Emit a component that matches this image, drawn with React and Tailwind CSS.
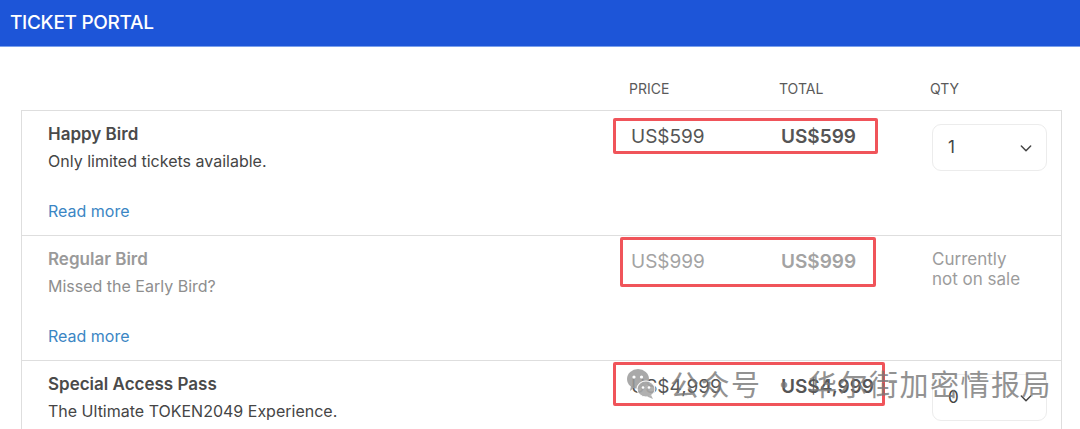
import React from "react";

function Chevron() {
  return (
    <svg width="16" height="16" viewBox="0 0 24 24" fill="none" stroke="#444" strokeWidth="2.2" strokeLinecap="round" strokeLinejoin="round">
      <path d="M5 9l7 7 7-7" />
    </svg>
  );
}

function QtySelect({ value }) {
  return (
    <div className="w-[115px] h-[47px] rounded-[9px] border border-[#ececec] flex items-center justify-between pl-[15px] pr-[12px] text-[17px] text-[#444]">
      <span>{value}</span>
      <Chevron />
    </div>
  );
}

function WeChatIcon() {
  return (
    <svg width="30" height="32" viewBox="0 0 30 32">
      <ellipse cx="12" cy="12" rx="11" ry="10" fill="#9a9a9a" opacity="0.85" />
      <path d="M5 19 L4 24 L9 20 Z" fill="#9a9a9a" opacity="0.85" />
      <circle cx="8" cy="10" r="1.6" fill="#fff" />
      <circle cx="15.5" cy="10" r="1.6" fill="#fff" />
      <ellipse cx="20" cy="22" rx="9" ry="8" fill="#a8a8a8" opacity="0.9" stroke="#fff" strokeWidth="1.2" />
      <path d="M25 28 L27 32 L21 29.5 Z" fill="#a8a8a8" opacity="0.9" />
      <circle cx="17" cy="20.5" r="1.3" fill="#fff" />
      <circle cx="23" cy="20.5" r="1.3" fill="#fff" />
    </svg>
  );
}

function Row({ title, sub, readMore, price, total, disabled, qty, box, last }) {
  const nameColor = disabled ? "text-[#9a9a9a]" : "text-[#4a4a4a]";
  const subColor = disabled ? "text-[#8e8e8e]" : "text-[#454545]";
  const priceColor = disabled ? "text-[#a3a3a3]" : "text-[#555]";
  return (
    <div className={`relative flex ${last ? "" : "border-b border-[#dedede]"} ${last ? "h-[70px]" : "h-[125px]"}`}>
      <div className="flex-1 pl-[26px] pt-[12px]">
        <div className={`text-[17px] leading-[22px] font-semibold ${nameColor}`}>{title}</div>
        <div className={`mt-[4px] text-[16px] leading-[24px] ${subColor}`}>{sub}</div>
        {readMore && (
          <div className="mt-[26px] text-[16px] leading-[24px] text-[#3b86c4]">Read more</div>
        )}
      </div>
      <div className={`w-[150px] pt-[14px] text-[19px] leading-[24px] ${priceColor}`}>{price}</div>
      <div className={`w-[151px] pt-[14px] text-[19px] leading-[24px] font-semibold ${priceColor}`}>{total}</div>
      <div className="w-[129px] pt-[13px]">{qty}</div>
      {box}
    </div>
  );
}

export default function App() {
  return (
    <div className="w-[1080px] h-[429px] overflow-hidden bg-white relative" style={{ fontFamily: "Inter, 'Noto Sans', sans-serif" }}>
      <div className="h-[47px] bg-[#1d55d8] border-b border-[#7aa0ec] flex items-center pl-[10px]">
        <span className="text-white text-[19px] font-medium tracking-[-0.3px]">TICKET PORTAL</span>
      </div>
      <div className="flex h-[63px] items-center pt-[19px] text-[14px] text-[#5a5a5a]">
        <div className="w-[629px]" />
        <div className="w-[150px]">PRICE</div>
        <div className="w-[151px]">TOTAL</div>
        <div>QTY</div>
      </div>
      <div className="ml-[21px] w-[1041px] border-l border-r border-t border-[#dedede]">
        <Row
          title="Happy Bird"
          sub="Only limited tickets available."
          readMore
          price="US$599"
          total="US$599"
          qty={<QtySelect value="1" />}
          box={<div className="absolute left-[591px] top-[7px] w-[265px] h-[36px] border-[3px] border-[#f0545a] rounded-[2px]" />}
        />
        <Row
          title="Regular Bird"
          sub="Missed the Early Bird?"
          readMore
          disabled
          price="US$999"
          total="US$999"
          qty={
            <div className="pt-[0px] text-[17px] leading-[20px] text-[#9c9c9c]">
              Currently
              <br />
              not on sale
            </div>
          }
          box={<div className="absolute left-[598px] top-[1px] w-[256px] h-[50px] border-[3px] border-[#f0545a] rounded-[2px]" />}
        />
        <Row
          title="Special Access Pass"
          sub="The Ultimate TOKEN2049 Experience."
          price="US$4,999"
          total="US$4,999"
          last
          qty={<div className="mt-[0px]"><QtySelect value="0" /></div>}
          box={<div className="absolute left-[591px] top-[1px] w-[272px] h-[44px] border-[3px] border-[#f0545a] rounded-[2px]" />}
        />
      </div>
      <div className="absolute left-[626px] top-[367px] flex items-center gap-[14px] pointer-events-none">
        <WeChatIcon />
        <span
          className="text-[29px] leading-[32px] text-[#777] opacity-80 tracking-[1.5px]"
          style={{ fontFamily: "'Noto Sans CJK SC', sans-serif" }}
        >
          公众号 · 华尔街加密情报局
        </span>
      </div>
    </div>
  );
}
